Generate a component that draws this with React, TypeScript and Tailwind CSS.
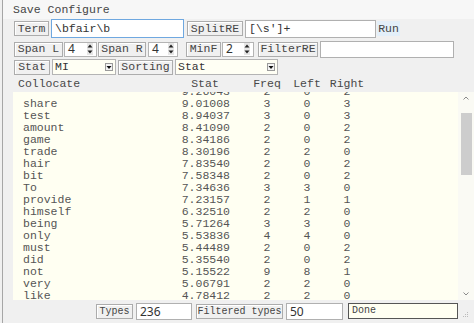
import React from "react";

function Btn({ c, children }: { c: string; children: React.ReactNode }) {
  return (
    <div
      className={`h-[15px] flex items-center justify-center border border-[#acacac] bg-[#f0f0f0] shadow-[inset_1px_1px_0_#ffffff] text-[#454545] leading-none shrink-0 ${c}`}
    >
      {children}
    </div>
  );
}

function SpinArrows() {
  return (
    <svg width="6" height="12" viewBox="0 0 6 12" className="shrink-0">
      <rect x="0" y="0" width="6" height="12" fill="#e6e6e6" />
      <path d="M3 1.5 L5.5 4.5 L0.5 4.5 Z" fill="#222" />
      <path d="M3 10.5 L5.5 7.5 L0.5 7.5 Z" fill="#222" />
    </svg>
  );
}

function Spin({ c, v }: { c: string; v: string }) {
  return (
    <div
      className={`h-[15px] flex items-center justify-between border border-[#b4b4b4] bg-white pl-[3px] pr-[3px] shrink-0 ${c}`}
    >
      <span className="font-sans text-[12px] text-[#333] leading-none">{v}</span>
      <SpinArrows />
    </div>
  );
}

function ComboArrow() {
  return (
    <svg width="8" height="8" viewBox="0 0 8 8" className="shrink-0">
      <rect x="0.5" y="0.5" width="7" height="7" fill="#f4f4f4" stroke="#9a9a9a" />
      <path d="M1.5 3 L6.5 3 L4 6 Z" fill="#111" />
    </svg>
  );
}

const rows: [string, string, string, string, string][] = [
  ["", "9.26043", "2", "0", "2"],
  ["share", "9.01008", "3", "0", "3"],
  ["test", "8.94037", "3", "0", "3"],
  ["amount", "8.41090", "2", "0", "2"],
  ["game", "8.34186", "2", "0", "2"],
  ["trade", "8.30196", "2", "2", "0"],
  ["hair", "7.83540", "2", "0", "2"],
  ["bit", "7.58348", "2", "0", "2"],
  ["To", "7.34636", "3", "3", "0"],
  ["provide", "7.23157", "2", "1", "1"],
  ["himself", "6.32510", "2", "2", "0"],
  ["being", "5.71264", "3", "3", "0"],
  ["only", "5.53836", "4", "4", "0"],
  ["must", "5.44489", "2", "0", "2"],
  ["did", "5.35540", "2", "0", "2"],
  ["not", "5.15522", "9", "8", "1"],
  ["very", "5.06791", "2", "2", "0"],
  ["like", "4.78412", "2", "2", "0"],
];

export default function App() {
  return (
    <div className="w-[474px] h-[323px] bg-[#f0f0f0] overflow-hidden pl-[2px] font-mono text-[11.5px]">
      <div className="h-full border-l border-[#a6a6a6] flex flex-col">
        {/* menu */}
        <div className="h-[19px] flex items-center pl-[10px] bg-[#f7f7f7] text-[#454545] leading-none">
          <span>Save</span>
          <span className="ml-[7px]">Configure</span>
        </div>

        {/* row 1 */}
        <div className="h-[19px] flex items-center pl-[11px]">
          <Btn c="w-[35px]">Term</Btn>
          <div className="ml-[2px] w-[133px] h-[19px] border border-[#6fa8e0] bg-white flex items-center pl-[3px] text-[#333] leading-none">
            \bfair\b
          </div>
          <Btn c="ml-[3px] w-[56px]">SplitRE</Btn>
          <div className="ml-[2px] w-[131px] h-[18px] border border-[#b0b0b0] bg-white flex items-center pl-[3px] text-[#333] leading-none">
            [\s']+
          </div>
          <div className="ml-[1px] w-[23px] h-[15px] flex items-center justify-center bg-[#e3eff9] text-[#454545] leading-none">
            Run
          </div>
        </div>

        {/* row 2 */}
        <div className="h-[18px] mt-[2px] flex items-center pl-[11px]">
          <Btn c="w-[49px]">Span L</Btn>
          <Spin c="ml-[1px] w-[33px]" v="4" />
          <Btn c="ml-[1px] w-[48px]">Span R</Btn>
          <Spin c="ml-[2px] w-[30px]" v="4" />
          <Btn c="ml-[8px] w-[35px]">MinF</Btn>
          <Spin c="ml-[1px] w-[32px]" v="2" />
          <Btn c="ml-[4px] w-[60px]">FilterRE</Btn>
          <div className="ml-[2px] w-[134px] h-[17px] border border-[#b0b0b0] bg-white" />
        </div>

        {/* row 3 */}
        <div className="h-[18px] flex items-center pl-[11px]">
          <Btn c="w-[36px]">Stat</Btn>
          <div className="ml-[2px] w-[64px] h-[16px] border border-[#b4b4b4] bg-[#fffff4] flex items-center justify-between pl-[2px] pr-[2px] text-[#333] leading-none">
            <span>MI</span>
            <ComboArrow />
          </div>
          <Btn c="ml-[2px] w-[55px]">Sorting</Btn>
          <div className="ml-[2px] w-[103px] h-[16px] border border-[#b4b4b4] bg-[#fffff4] flex items-center justify-between pl-[2px] pr-[2px] text-[#333] leading-none">
            <span>Stat</span>
            <ComboArrow />
          </div>
        </div>

        {/* tree */}
        <div className="ml-[10px] flex flex-col">
          <div className="h-[16px] flex items-center text-[#484848] leading-none">
            <span className="w-[162px] pl-[5px]">Collocate</span>
            <span className="w-[60px] text-center">Stat</span>
            <span className="w-[12px]" />
            <span className="w-[40px] text-center">Freq</span>
            <span className="w-[40px] text-center">Left</span>
            <span className="w-[40px] text-center">Right</span>
          </div>
          <div className="h-[208px] flex bg-[#fffff2]">
            <div className="flex-1 overflow-hidden">
              <div className="-mt-[6px] flex flex-col">
                {rows.map((r, i) => (
                  <div key={i} className="h-[12px] flex items-center text-[#555] leading-none">
                    <span className="w-[162px] pl-[10px]">{r[0]}</span>
                    <span className="w-[60px] text-right pr-[5px]">{r[1]}</span>
                    <span className="w-[12px]" />
                    <span className="w-[40px] text-center">{r[2]}</span>
                    <span className="w-[40px] text-center">{r[3]}</span>
                    <span className="w-[40px] text-center">{r[4]}</span>
                  </div>
                ))}
              </div>
            </div>
            <div className="w-[16px] flex flex-col items-center bg-[#fafaf4]">
              <svg width="8" height="6" viewBox="0 0 8 6" className="mt-[3px]">
                <path d="M1.5 4.5 L4 2 L6.5 4.5" fill="none" stroke="#8a8a8a" strokeWidth="1" />
              </svg>
              <div className="mt-[12px] w-[11px] h-[62px] bg-[#cdcdcd]" />
              <div className="flex-1" />
              <svg width="8" height="6" viewBox="0 0 8 6" className="mb-[3px]">
                <path d="M1.5 1.5 L4 4 L6.5 1.5" fill="none" stroke="#8a8a8a" strokeWidth="1" />
              </svg>
            </div>
          </div>
        </div>

        {/* bottom bar */}
        <div className="flex-1 flex items-start pt-[3px] pl-[93px] relative">
          <Btn c="w-[37px] text-[10px] mt-[1px]">Types</Btn>
          <div className="ml-[3px] w-[56px] h-[17px] border border-[#b0b0b0] bg-white flex items-center pl-[3px] font-sans text-[12px] text-[#333] leading-none">
            236
          </div>
          <Btn c="ml-[4px] w-[87px] text-[10px] mt-[1px]">Filtered types</Btn>
          <div className="ml-[3px] w-[57px] h-[17px] border border-[#b0b0b0] bg-white flex items-center pl-[3px] font-sans text-[12px] text-[#333] leading-none">
            50
          </div>
          <div className="ml-[5px] w-[110px] h-[16px] border border-[#555] bg-[#fffff2] flex items-center pl-[3px] text-[10px] text-[#444] leading-none">
            Done
          </div>
          <svg width="6" height="6" viewBox="0 0 6 6" className="absolute right-[5px] bottom-[5px]">
            <rect x="4" y="0" width="1" height="1" fill="#bbb" />
            <rect x="2" y="2" width="1" height="1" fill="#bbb" />
            <rect x="4" y="2" width="1" height="1" fill="#bbb" />
            <rect x="0" y="4" width="1" height="1" fill="#bbb" />
            <rect x="2" y="4" width="1" height="1" fill="#bbb" />
            <rect x="4" y="4" width="1" height="1" fill="#bbb" />
          </svg>
        </div>
      </div>
    </div>
  );
}
